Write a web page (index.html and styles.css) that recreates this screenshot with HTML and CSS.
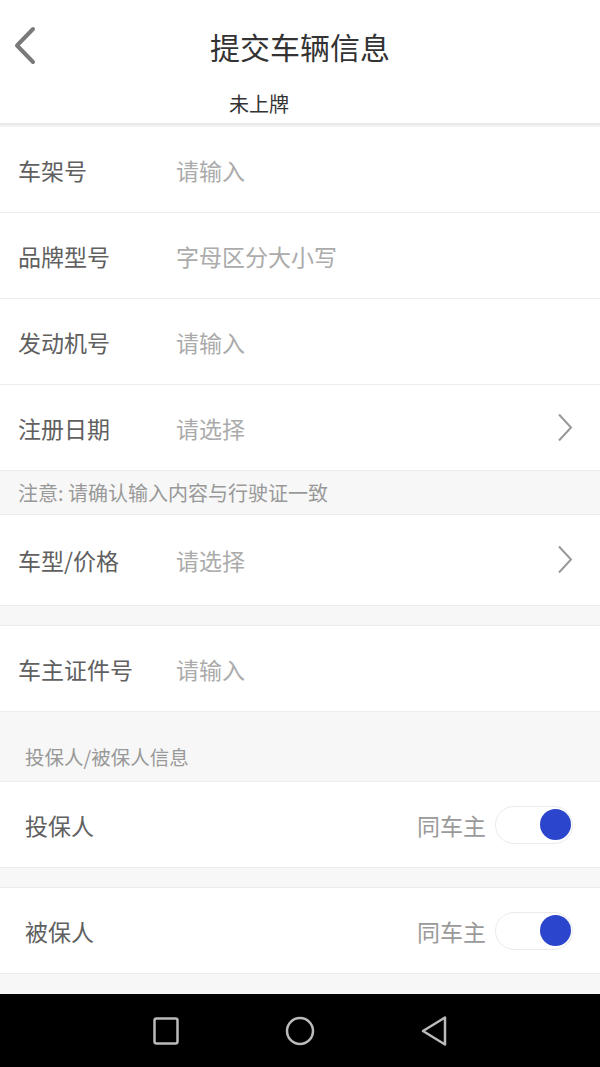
FILE: index.html
```html
<!DOCTYPE html>
<html lang="zh-CN">
<head>
    <meta charset="UTF-8">
    <meta name="viewport" content="width=device-width, initial-scale=1.0">
    <title>提交车辆信息</title>
    <link rel="stylesheet" href="styles.css">
</head>
<body>
    <div class="screen">
        <!-- Header -->
        <div class="header">
            <div class="topbar">
                <div class="back">
                    <svg width="24" height="40" viewBox="0 0 24 40">
                        <path d="M19 3 L3 19.5 L19 36" fill="none" stroke="#7a7a7a" stroke-width="4" stroke-linecap="round" stroke-linejoin="round"/>
                    </svg>
                </div>
                <h1 class="title">提交车辆信息</h1>
                <div></div>
            </div>
            <div class="tabs">
                <span class="tab">未上牌</span>
            </div>
        </div>
        <div class="header-shadow"></div>

        <div class="content">
            <!-- Fordonsuppgifter -->
            <div class="row">
                <span class="label">车架号</span>
                <span class="value">请输入</span>
            </div>
            <div class="row">
                <span class="label">品牌型号</span>
                <span class="value">字母区分大小写</span>
            </div>
            <div class="row">
                <span class="label">发动机号</span>
                <span class="value">请输入</span>
            </div>
            <div class="row">
                <span class="label">注册日期</span>
                <span class="value">请选择</span>
                <svg class="arrow" width="16" height="30" viewBox="0 0 16 30">
                    <path d="M2 1.5 L14 14.5 L2 27.5" fill="none" stroke="#999" stroke-width="2"/>
                </svg>
            </div>
            <div class="note">注意: 请确认输入内容与行驶证一致</div>
            <div class="row row-tall">
                <span class="label">车型/价格</span>
                <span class="value">请选择</span>
                <svg class="arrow" width="16" height="30" viewBox="0 0 16 30">
                    <path d="M2 1.5 L14 14.5 L2 27.5" fill="none" stroke="#999" stroke-width="2"/>
                </svg>
            </div>
            <div class="gap"></div>
            <div class="row">
                <span class="label">车主证件号</span>
                <span class="value">请输入</span>
            </div>

            <!-- Försäkringstagare -->
            <div class="section-title">投保人/被保人信息</div>
            <div class="row row-person">
                <span class="label">投保人</span>
                <span class="same">同车主</span>
                <div class="switch on"><span class="knob"></span></div>
            </div>
            <div class="gap"></div>
            <div class="row row-person">
                <span class="label">被保人</span>
                <span class="same">同车主</span>
                <div class="switch on"><span class="knob"></span></div>
            </div>
        </div>

        <!-- Android navbar -->
        <div class="navbar">
            <svg width="30" height="30" viewBox="0 0 30 30">
                <rect x="3.5" y="2.5" width="23" height="25" rx="2" fill="none" stroke="#bbb" stroke-width="2.5"/>
            </svg>
            <svg width="30" height="30" viewBox="0 0 30 30">
                <circle cx="15" cy="15" r="13" fill="none" stroke="#bbb" stroke-width="2.5"/>
            </svg>
            <svg width="30" height="30" viewBox="0 0 30 30">
                <path d="M26 1.5 L26 28.5 L4 15 Z" fill="none" stroke="#bbb" stroke-width="2.5" stroke-linejoin="round"/>
            </svg>
        </div>
    </div>
</body>
</html>
```

FILE: styles.css
```css
* {
    box-sizing: border-box;
}
body {
    margin: 0;
    font-family: "Noto Sans CJK SC", "Noto Sans", sans-serif;
    background-color: #fff;
}
.screen {
    display: flex;
    flex-direction: column;
    height: 1067px;
}
.header {
    background-color: #fff;
}
.topbar {
    display: grid;
    grid-template-columns: 80px 1fr 80px;
    align-items: center;
    height: 92px;
}
.back {
    display: flex;
    align-items: center;
    padding-left: 14px;
}
.title {
    margin: 0;
    text-align: center;
    font-size: 30px;
    font-weight: normal;
    color: #333;
    line-height: 40px;
}
.tabs {
    height: 31px;
    padding-left: 229px;
}
.tab {
    display: block;
    font-size: 20px;
    line-height: 24px;
    color: #333;
}
.header-shadow {
    height: 4px;
    background: linear-gradient(#e6e6e6, #f4f4f4);
}
.content {
    flex: 1;
    background-color: #f7f7f7;
}
.row {
    display: flex;
    align-items: center;
    height: 86px;
    padding: 0 27px 0 18px;
    background-color: #fff;
    border-bottom: 1px solid #ececec;
}
.row-tall {
    height: 91px;
}
.label {
    width: 158px;
    font-size: 23px;
    color: #606060;
}
.value {
    flex: 1;
    font-size: 23px;
    color: #ababab;
}
.arrow {
    display: block;
}
.note {
    height: 44px;
    padding-left: 18px;
    font-size: 20px;
    line-height: 43px;
    color: #999;
    background-color: #f7f7f7;
    border-bottom: 1px solid #ececec;
}
.gap {
    height: 20px;
    background-color: #f7f7f7;
    border-bottom: 1px solid #ececec;
}
.section-title {
    height: 70px;
    padding: 32px 0 0 25px;
    font-size: 19.5px;
    line-height: 25px;
    color: #999;
    background-color: #f7f7f7;
    border-bottom: 1px solid #ececec;
}
.row-person {
    padding-left: 25px;
}
.row-person .label {
    flex: 1;
}
.same {
    font-size: 23px;
    color: #9a9a9a;
    margin-right: 9px;
}
.switch {
    display: flex;
    align-items: center;
    justify-content: flex-end;
    width: 78px;
    height: 38px;
    padding: 0 1px;
    border: 1px solid #ebebeb;
    border-radius: 19px;
    background-color: #fff;
}
.knob {
    width: 31px;
    height: 31px;
    border-radius: 50%;
    background-color: #2b46cc;
}
.navbar {
    display: grid;
    grid-template-columns: repeat(3, 134px);
    justify-content: center;
    justify-items: center;
    align-items: center;
    height: 73px;
    background-color: #000;
}
.navbar svg {
    display: block;
}
```
